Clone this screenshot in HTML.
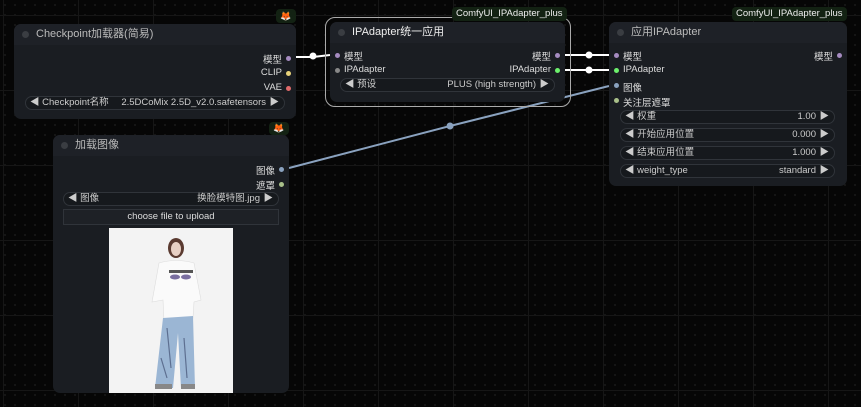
<!DOCTYPE html><html><head><meta charset="utf-8"><style>
*{margin:0;padding:0;box-sizing:border-box}
body{width:861px;height:407px;overflow:hidden;background:#060606;font-family:"Liberation Sans","Noto Sans CJK SC",sans-serif;font-size:10px;color:#ddd;position:relative}
.bg{position:absolute;inset:0;background-image:linear-gradient(#161616 1px,transparent 1px),linear-gradient(90deg,#161616 1px,transparent 1px),radial-gradient(circle,#222 0.7px,transparent 0.9px);background-size:75px 75px,75px 75px,10px 10px;background-position:0 15px,3px 0,0 0}
.n{position:absolute;background:#1a1d22;border-radius:7px;overflow:hidden}
.t{height:21px;background:#1e2127;color:#bbb;font-size:11px;line-height:21px;padding-left:22px;position:relative}
.t:before{content:"";position:absolute;left:8px;top:7px;width:7px;height:7px;border-radius:50%;background:#3a3d42}
.a{position:absolute;font-size:9.5px;color:#ddd;white-space:nowrap}
.d{position:absolute;width:5px;height:5px;border-radius:50%}
.w{position:absolute;height:14px;border:1px solid #30343a;border-radius:7px;background:#16191d;font-size:9.5px;color:#ccc;line-height:12px}
.w .l{position:absolute;left:4px}.w .v{position:absolute;right:18px}.w .r{position:absolute;right:5px}
.badge{position:absolute;background:#132213;color:#eee;font-size:9.5px;line-height:14px;border-radius:4px;padding:0 4px}
</style></head><body><div class="bg"></div>

<svg style="position:absolute;left:0;top:0" width="861" height="407">
<path d="M289 168 L450 126 L609 86" stroke="#8aa2bf" stroke-width="2" fill="none"/>
<circle cx="450" cy="126" r="3.5" fill="#8aa2bf"/>
<path d="M296 57 L313 57 L330 55" stroke="#fff" stroke-width="2" fill="none"/><circle cx="313" cy="56" r="3.5" fill="#fff"/>
<path d="M565 55 L609 55" stroke="#fff" stroke-width="2"/><circle cx="589" cy="55" r="3.5" fill="#fff"/>
<path d="M565 70 L609 70" stroke="#fff" stroke-width="2"/><circle cx="589" cy="70" r="3.5" fill="#fff"/>
</svg>

<div class="badge" style="left:276px;top:9px;width:20px;height:14px;padding:0;text-align:center;font-size:9px">🦊</div>
<div class="n" style="left:14px;top:24px;width:282px;height:95px">
<div class="t">Checkpoint加载器(简易)</div>
<div class="a" style="right:14px;top:28px">模型</div><div class="d" style="right:5px;top:32px;background:#a58bc0"></div>
<div class="a" style="right:14px;top:43px">CLIP</div><div class="d" style="right:5px;top:47px;background:#e8d27a"></div>
<div class="a" style="right:14px;top:58px">VAE</div><div class="d" style="right:5px;top:62px;background:#e06a6a"></div>
<div class="w" style="left:11px;top:72px;width:260px"><span class="l">◀ Checkpoint名称</span><span class="v">2.5DCoMix 2.5D_v2.0.safetensors</span><span class="r">▶</span></div>
</div>

<div style="position:absolute;left:325px;top:17px;width:246px;height:90px;border:1px solid #aaa;border-radius:10px"></div>
<div class="badge" style="left:452px;top:7px">ComfyUI_IPAdapter_plus</div>
<div class="n" style="left:330px;top:22px;width:235px;height:80px">
<div class="t" style="color:#eee">IPAdapter统一应用</div>
<div class="d" style="left:5px;top:31px;background:#a58bc0"></div><div class="a" style="left:14px;top:27px">模型</div>
<div class="d" style="left:5px;top:46px;background:#888"></div><div class="a" style="left:14px;top:42px">IPAdapter</div>
<div class="a" style="right:14px;top:27px">模型</div><div class="d" style="right:5px;top:31px;background:#a58bc0"></div>
<div class="a" style="right:14px;top:42px">IPAdapter</div><div class="d" style="right:5px;top:46px;background:#6cf06c"></div>
<div class="w" style="left:10px;top:56px;width:215px"><span class="l">◀ 预设</span><span class="v">PLUS (high strength)</span><span class="r">▶</span></div>
</div>

<div class="badge" style="left:732px;top:7px">ComfyUI_IPAdapter_plus</div>
<div class="n" style="left:609px;top:22px;width:238px;height:164px">
<div class="t">应用IPAdapter</div>
<div class="d" style="left:5px;top:31px;background:#a58bc0"></div><div class="a" style="left:14px;top:27px">模型</div>
<div class="d" style="left:5px;top:46px;background:#6cf06c"></div><div class="a" style="left:14px;top:42px">IPAdapter</div>
<div class="d" style="left:5px;top:61px;background:#8aa2bf"></div><div class="a" style="left:14px;top:58px">图像</div>
<div class="d" style="left:5px;top:76px;background:#a9c08a"></div><div class="a" style="left:14px;top:73px">关注层遮罩</div>
<div class="a" style="right:14px;top:27px">模型</div><div class="d" style="right:5px;top:31px;background:#a58bc0"></div>
<div class="w" style="left:11px;top:88px;width:215px"><span class="l">◀ 权重</span><span class="v">1.00</span><span class="r">▶</span></div>
<div class="w" style="left:11px;top:106px;width:215px"><span class="l">◀ 开始应用位置</span><span class="v">0.000</span><span class="r">▶</span></div>
<div class="w" style="left:11px;top:124px;width:215px"><span class="l">◀ 结束应用位置</span><span class="v">1.000</span><span class="r">▶</span></div>
<div class="w" style="left:11px;top:142px;width:215px"><span class="l">◀ weight_type</span><span class="v">standard</span><span class="r">▶</span></div>
</div>

<div class="badge" style="left:269px;top:122px;width:20px;height:13px;padding:0;text-align:center;font-size:9px;line-height:13px">🦊</div>
<div class="n" style="left:53px;top:135px;width:236px;height:258px">
<div class="t">加载图像</div>
<div class="a" style="right:14px;top:28px">图像</div><div class="d" style="right:5px;top:32px;background:#8aa2bf"></div>
<div class="a" style="right:14px;top:43px">遮罩</div><div class="d" style="right:5px;top:47px;background:#a9c08a"></div>
<div class="w" style="left:10px;top:57px;width:216px"><span class="l">◀ 图像</span><span class="v">换脸模特图.jpg</span><span class="r">▶</span></div>
<div style="position:absolute;left:10px;top:74px;width:216px;height:16px;border:1px solid #30343a;background:#1e2126;text-align:center;font-size:9.5px;line-height:14px;color:#ddd">choose file to upload</div>
<svg style="position:absolute;left:56px;top:93px" width="124" height="165">
<rect width="124" height="165" fill="#f3f3f3"/>
<ellipse cx="67" cy="20" rx="8" ry="10" fill="#5a3a30"/>
<ellipse cx="67" cy="21" rx="5" ry="7" fill="#e8d0c4"/>
<path d="M50 35 Q67 30 85 35 L92 72 L85 74 L84 90 L55 93 L54 72 L43 74 Z" fill="#fafafa" stroke="#ddd" stroke-width="0.6"/>
<rect x="60" y="42" width="24" height="3" fill="#555"/>
<ellipse cx="66" cy="49" rx="5" ry="2.5" fill="#7a6fa0"/><ellipse cx="77" cy="49" rx="5" ry="2.5" fill="#7a6fa0"/>
<path d="M54 90 L84 88 L86 160 L72 160 L69 105 L64 160 L46 160 Z" fill="#9bb6d4"/>
<path d="M58 100 L62 140 M75 110 L78 150 M52 130 L58 150" stroke="#5d6f90" stroke-width="1.2"/>
<rect x="46" y="156" width="17" height="5" fill="#888"/><rect x="72" y="156" width="14" height="5" fill="#888"/>
</svg>
</div>
</body></html>
